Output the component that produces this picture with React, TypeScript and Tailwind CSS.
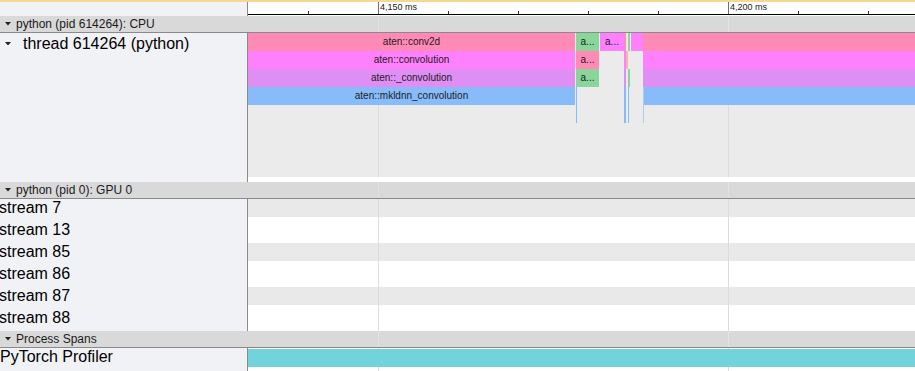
import React from 'react';

// timeline starts at x=248 (left label column is 247 + 1px border)
const majorTicks = [
  { x: 130, label: '4,150 ms' },
  { x: 480, label: '4,200 ms' },
];
const minorTicks = [60, 200, 270, 340, 410, 550, 620];

const PINK = 'bg-[#ff8ab6]';
const MAGENTA = 'bg-[#ff80fd]';
const PURPLE = 'bg-[#df8ef3]';
const BLUE = 'bg-[#88bbf9]';
const GREEN = 'bg-[#88d69a]';

type Slice = { row: number; x: number; w: number; color: string; label?: string; h?: number };

const slices: Slice[] = [
  { row: 0, x: 0, w: 327, color: PINK, label: 'aten::conv2d' },
  { row: 0, x: 328, w: 23, color: GREEN, label: 'a...' },
  { row: 0, x: 352, w: 24, color: MAGENTA, label: 'a...' },
  { row: 0, x: 376, w: 2, color: PINK },
  { row: 0, x: 380, w: 2, color: GREEN },
  { row: 0, x: 383, w: 12, color: MAGENTA },
  { row: 0, x: 395, w: 272, color: PINK },

  { row: 1, x: 0, w: 327, color: MAGENTA, label: 'aten::convolution' },
  { row: 1, x: 328, w: 23, color: PINK, label: 'a...' },
  { row: 1, x: 376, w: 2, color: MAGENTA },
  { row: 1, x: 378, w: 2, color: 'bg-[#f5b8a8]' },
  { row: 1, x: 395, w: 272, color: MAGENTA },

  { row: 2, x: 0, w: 327, color: PURPLE, label: 'aten::_convolution' },
  { row: 2, x: 328, w: 23, color: GREEN, label: 'a...' },
  { row: 2, x: 376, w: 2, color: PURPLE },
  { row: 2, x: 380, w: 2, color: GREEN },
  { row: 2, x: 395, w: 272, color: PURPLE },

  { row: 3, x: 0, w: 327, color: BLUE, label: 'aten::mkldnn_convolution' },
  { row: 3, x: 328, w: 1, color: BLUE, h: 36 },
  { row: 3, x: 376, w: 2, color: BLUE, h: 36 },
  { row: 3, x: 380, w: 1, color: BLUE, h: 36 },
  { row: 3, x: 395, w: 272, color: BLUE },
  { row: 3, x: 395, w: 1, color: 'bg-[#a9cdf5]', h: 36 },
];

const streams = ['stream 7', 'stream 13', 'stream 85', 'stream 86', 'stream 87', 'stream 88'];

const Caret: React.FC<{ size?: number }> = ({ size = 6 }) => (
  <svg width={size} height={size * 0.6} viewBox="0 0 10 6" className="shrink-0">
    <polygon points="0,0 10,0 5,6" fill="#222" />
  </svg>
);

const GridLines: React.FC<{ tone?: string }> = ({ tone = 'bg-[#dcdcdc]' }) => (
  <>
    {majorTicks.map((t) => (
      <div key={t.x} className={`absolute top-0 bottom-0 w-px ${tone}`} style={{ left: t.x }} />
    ))}
  </>
);

const SectionHeader: React.FC<{ title: string }> = ({ title }) => (
  <div className="relative flex h-[17px] shrink-0 items-center gap-[5px] border-b border-[#8a8a8a] bg-[#d9d9d9] pl-[5px] text-[12px] text-[#1a1a1a]">
    <Caret />
    <span className="leading-none">{title}</span>
    <div className="absolute top-0 bottom-0 left-[248px] right-0">
      <GridLines tone="bg-[#e2e2e2]" />
    </div>
  </div>
);

const Label: React.FC<{ className?: string; children?: React.ReactNode }> = ({ className = '', children }) => (
  <div className={`w-[248px] shrink-0 overflow-hidden border-r border-[#8a8a8a] bg-[#f1f2f6] ${className}`}>{children}</div>
);

export default function App() {
  return (
    <div className="flex h-[371px] w-[915px] flex-col overflow-hidden bg-white font-['Liberation_Sans',Arial,sans-serif] text-black">
      <div className="h-[2px] shrink-0 bg-[#f6d892]" />

      {/* ruler */}
      <div className="flex h-[14px] shrink-0">
        <Label className="h-full" />
        <div className="flex-1">
          <div className="relative h-[13px] border-b border-black bg-white">
            {majorTicks.map((t) => (
              <div key={t.x} className="absolute top-0 bottom-0" style={{ left: t.x }}>
                <div className="absolute top-0 bottom-0 left-0 w-px bg-[#6e6e6e]" />
                <span className="absolute top-[-1px] left-[2px] whitespace-nowrap text-[9px] leading-[12px] text-[#222]">
                  {t.label}
                </span>
              </div>
            ))}
            {minorTicks.map((x) => (
              <div key={x} className="absolute bottom-0 h-[3px] w-px bg-[#333]" style={{ left: x }} />
            ))}
          </div>
        </div>
      </div>

      <SectionHeader title="python (pid 614264): CPU" />

      {/* thread row */}
      <div className="flex h-[149px] shrink-0">
        <Label className="h-full">
          <div className="flex h-[19px] items-center gap-[12px] pl-[5px] pt-[2px]">
            <Caret size={6} />
            <span className="text-[16px] leading-none whitespace-nowrap">thread 614264 (python)</span>
          </div>
        </Label>
        <div className="flex-1">
          <div className="relative h-[144px] overflow-hidden bg-[#ebebeb]">
            <GridLines />
            {slices.map((s, i) => (
              <div
                key={i}
                className={`absolute flex items-center justify-center overflow-hidden ${s.color}`}
                style={{ left: s.x, top: s.row * 18, width: s.w, height: s.h ?? 18 }}
              >
                {s.label && (
                  <span className="whitespace-nowrap text-[10px] leading-none text-[#1c1c1c]">{s.label}</span>
                )}
              </div>
            ))}
          </div>
        </div>
      </div>

      <SectionHeader title="python (pid 0): GPU 0" />

      {streams.map((name, i) => (
        <div key={name} className="flex h-[22px] shrink-0">
          <Label className="h-full">
            <div className="ml-[-1px] h-[18px] whitespace-nowrap text-[16px] leading-[18px]">{name}</div>
          </Label>
          <div className="relative flex-1">
            {i % 2 === 0 && <div className="h-[18px] bg-[#e9e9e9]" />}
            <GridLines />
          </div>
        </div>
      ))}

      <SectionHeader title="Process Spans" />

      <div className="flex h-[23px] shrink-0">
        <Label className="h-full">
          <div className="h-[18px] whitespace-nowrap text-[16px] leading-[18px]">PyTorch Profiler</div>
        </Label>
        <div className="relative flex-1">
          <GridLines />
          <div className="relative mt-px h-[18px] bg-[#72d3da]" />
        </div>
      </div>
    </div>
  );
}
